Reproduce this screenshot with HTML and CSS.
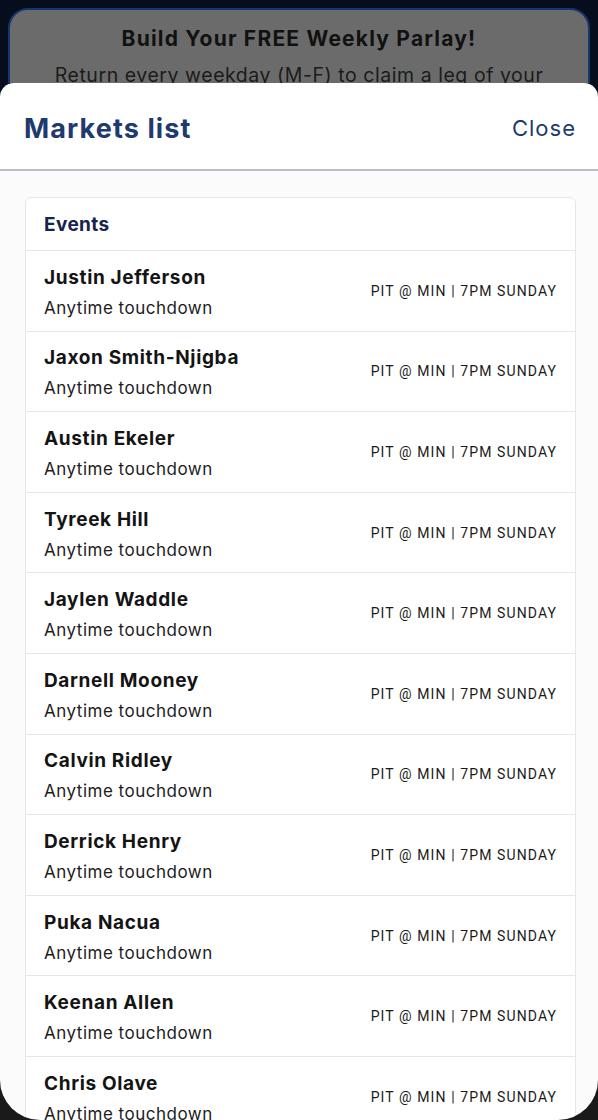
FILE: index.html
```html
<!DOCTYPE html>
<html>
<head>
<meta charset="utf-8">
<link rel="stylesheet" href="styles.css">
</head>
<body>
<div class="backdrop">
  <div class="promo">
    <div class="promo-title">Build Your FREE Weekly Parlay!</div>
    <div class="promo-text">Return every weekday (M-F) to claim a leg of your</div>
  </div>
</div>
<div class="sheet">
  <div class="sheet-header">
    <div class="sheet-title">Markets list</div>
    <div class="sheet-close">Close</div>
  </div>
  <div class="sheet-body">
    <div class="card">
      <div class="card-head">Events</div>
      <div class="row"><div class="info"><div class="name">Justin Jefferson</div><div class="market">Anytime touchdown</div></div><div class="game">PIT @ MIN | 7PM SUNDAY</div></div>
      <div class="row"><div class="info"><div class="name">Jaxon Smith-Njigba</div><div class="market">Anytime touchdown</div></div><div class="game">PIT @ MIN | 7PM SUNDAY</div></div>
      <div class="row"><div class="info"><div class="name">Austin Ekeler</div><div class="market">Anytime touchdown</div></div><div class="game">PIT @ MIN | 7PM SUNDAY</div></div>
      <div class="row"><div class="info"><div class="name">Tyreek Hill</div><div class="market">Anytime touchdown</div></div><div class="game">PIT @ MIN | 7PM SUNDAY</div></div>
      <div class="row"><div class="info"><div class="name">Jaylen Waddle</div><div class="market">Anytime touchdown</div></div><div class="game">PIT @ MIN | 7PM SUNDAY</div></div>
      <div class="row"><div class="info"><div class="name">Darnell Mooney</div><div class="market">Anytime touchdown</div></div><div class="game">PIT @ MIN | 7PM SUNDAY</div></div>
      <div class="row"><div class="info"><div class="name">Calvin Ridley</div><div class="market">Anytime touchdown</div></div><div class="game">PIT @ MIN | 7PM SUNDAY</div></div>
      <div class="row"><div class="info"><div class="name">Derrick Henry</div><div class="market">Anytime touchdown</div></div><div class="game">PIT @ MIN | 7PM SUNDAY</div></div>
      <div class="row"><div class="info"><div class="name">Puka Nacua</div><div class="market">Anytime touchdown</div></div><div class="game">PIT @ MIN | 7PM SUNDAY</div></div>
      <div class="row"><div class="info"><div class="name">Keenan Allen</div><div class="market">Anytime touchdown</div></div><div class="game">PIT @ MIN | 7PM SUNDAY</div></div>
      <div class="row"><div class="info"><div class="name">Chris Olave</div><div class="market">Anytime touchdown</div></div><div class="game">PIT @ MIN | 7PM SUNDAY</div></div>
    </div>
  </div>
</div>
<div class="screen-mask"></div>
</body>
</html>
```

FILE: styles.css
```css
* { box-sizing: border-box; }
html, body {
  margin: 0;
  padding: 0;
  height: 1120px;
  overflow: hidden;
}
body {
  background: #060e1d;
  font-family: Inter, Lato, sans-serif;
  color: #161616;
}
.backdrop {
  padding: 8px 8px 0 8px;
  height: 83px;
  overflow: hidden;
}
.promo {
  height: 120px;
  background: #6b6b6b;
  border: 2px solid #15356d;
  border-radius: 20px;
  text-align: center;
  padding-top: 14px;
}
.promo-title {
  font-weight: 700;
  font-size: 21px;
  letter-spacing: 1.2px;
  line-height: 30px;
  color: #111;
}
.promo-text {
  margin-top: 8px;
  font-size: 19.5px;
  letter-spacing: 0.55px;
  line-height: 26px;
  color: #1b1b1b;
  white-space: nowrap;
}
.sheet {
  background: #ffffff;
  border-radius: 14px 14px 0 0;
  height: 1037px;
  overflow: hidden;
}
.sheet-header {
  height: 88px;
  border-bottom: 2px solid #b9bdc7;
  display: flex;
  align-items: center;
  justify-content: space-between;
  padding: 4px 22px 0 24px;
}
.sheet-title {
  font-weight: 700;
  font-size: 27px;
  letter-spacing: 1.1px;
  color: #1e3a6f;
}
.sheet-close {
  font-size: 22px;
  letter-spacing: 1px;
  color: #1e3a6f;
}
.sheet-body {
  background: #fbfbfc;
  padding: 26px 22px 0 25px;
  height: 100%;
}
.card {
  background: #fff;
  border: 1px solid #e4e7ee;
  border-radius: 6px;
}
.card-head {
  height: 52px;
  display: flex;
  align-items: center;
  padding-left: 18px;
  font-weight: 700;
  font-size: 19px;
  letter-spacing: 0.4px;
  color: #14234f;
}
.row {
  border-top: 1px solid #e4e7ee;
  height: 80.6px;
  display: flex;
  align-items: center;
  justify-content: space-between;
  padding: 5px 18px 0 18px;
}
.info {
  display: flex;
  flex-direction: column;
  gap: 4px;
  padding-bottom: 1px;
}
.name {
  font-weight: 700;
  font-size: 19px;
  letter-spacing: 0.65px;
  line-height: 26px;
  color: #141414;
}
.market {
  font-size: 17px;
  letter-spacing: 0.5px;
  line-height: 26px;
  color: #1c1c1c;
}
.game {
  font-family: Roboto, sans-serif;
  font-size: 14px;
  letter-spacing: 1.1px;
  color: #1a1a1a;
  margin-bottom: 5px;
}
.screen-mask {
  position: fixed;
  left: 0;
  top: 0;
  width: 598px;
  height: 1120px;
  border-radius: 0 0 40px 40px;
  box-shadow: 0 0 0 60px #1a1a1a;
  pointer-events: none;
}
```
